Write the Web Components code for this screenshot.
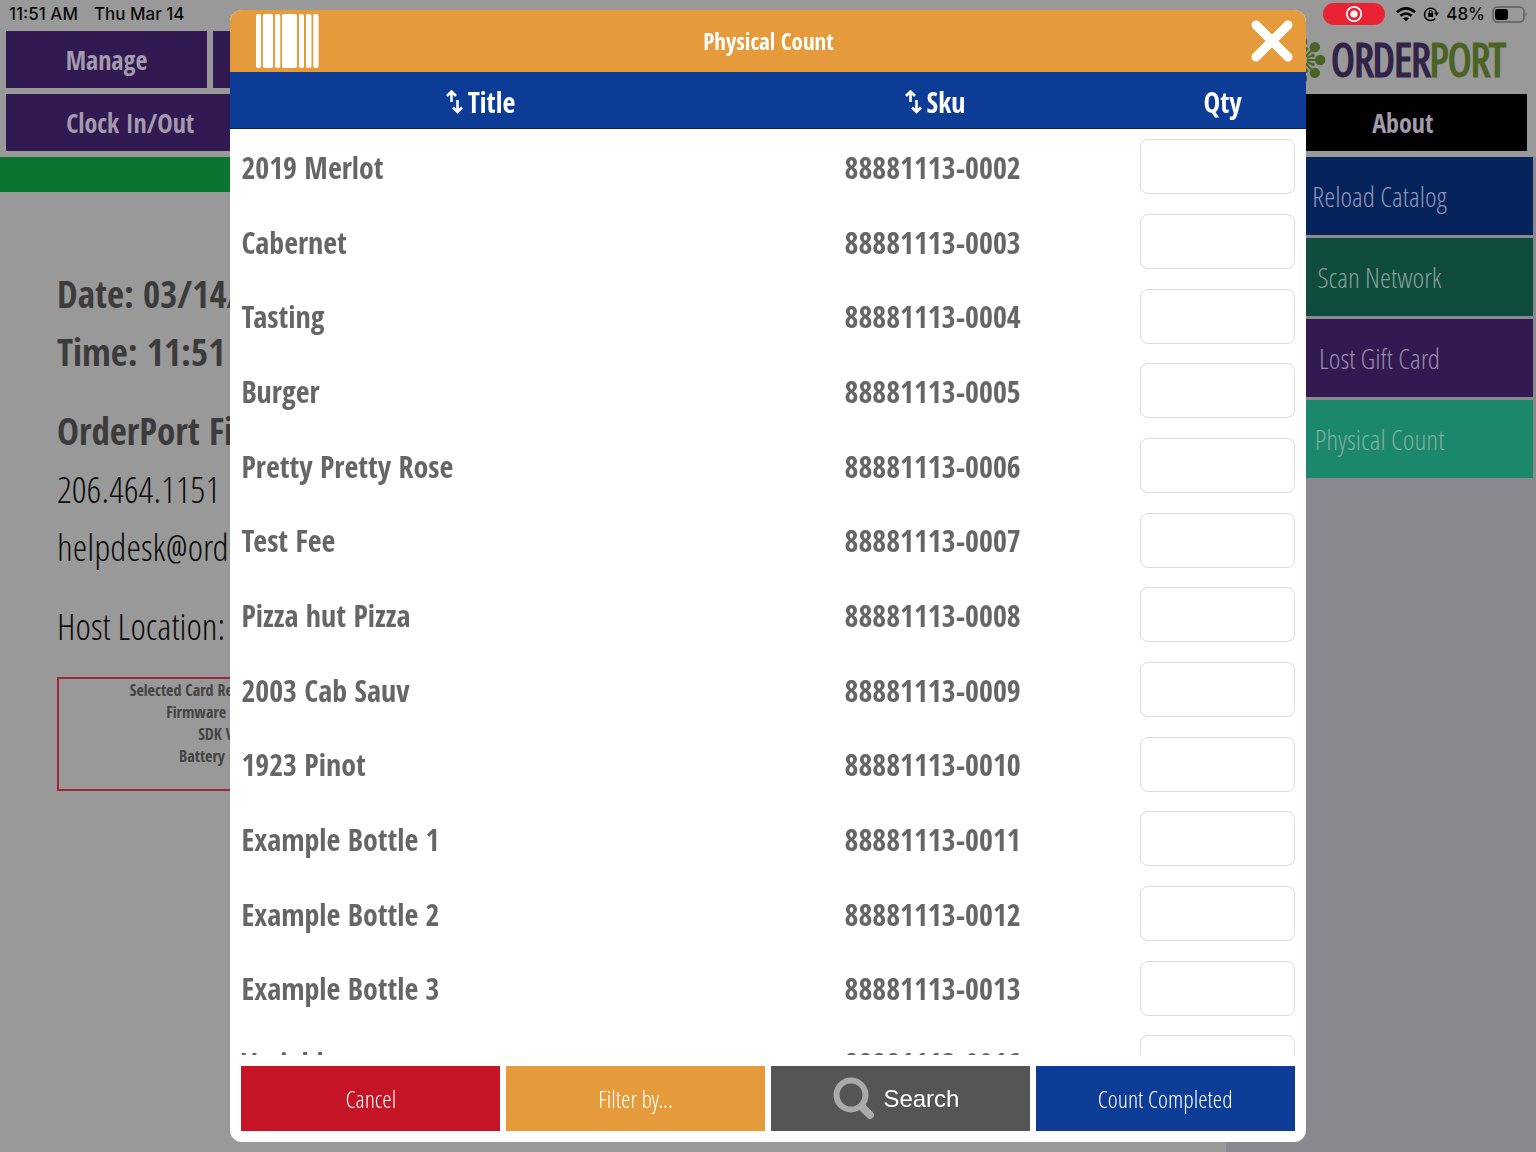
<!DOCTYPE html>
<html lang="en">
<head>
<meta charset="utf-8">
<title>OrderPort - Physical Count</title>
<style>
	body {
		margin: 0;
		min-height: 100vh;
		background: #999;
		color: #3c3c3c;
		--bold: "Open Sans Condensed", "Open Sans", sans-serif;
		--light: "Open Sans Condensed Light", "Open Sans Condensed", "Open Sans", sans-serif;
		font-family: var(--bold);
	}
</style>
</head>
<body>
<pos-screen></pos-screen>
<count-dialog></count-dialog>

<script>
(function() {
	function define(name, html, setup) {
		const tmpl = document.createElement('template');
		tmpl.innerHTML = html;
		customElements.define(name, class extends HTMLElement {
			constructor() {
				super();
				const shadow = this.attachShadow({ mode: 'open' });
				shadow.appendChild(tmpl.content.cloneNode(true));
				if (setup) setup(this, shadow);
			}
		});
	}

	define('status-bar', `
		<style>
			:host {
				display: flex;
				align-items: center;
				gap: 16px;
				height: 28px;
				padding: 0 9px;
				color: #0a0a0a;
				font: 500 17px Inter, sans-serif;
			}
			.right { display: flex; align-items: center; gap: 7px; margin-left: auto; }
			.rec { width: 62px; height: 22px; border-radius: 11px; background: #ea2334; display: grid; place-items: center; margin-right: 4px; }
			svg { display: block; }
		</style>
		<span>11:51 AM</span><span>Thu Mar 14</span>
		<div class="right">
			<div class="rec"><svg width="18" height="18" viewBox="0 0 18 18"><circle cx="9" cy="9" r="7.2" fill="none" stroke="#fff" stroke-width="1.8"/><circle cx="9" cy="9" r="3.6" fill="#fff"/></svg></div>
			<svg width="20" height="15" viewBox="0 0 20 15" fill="none" stroke="#000" stroke-width="2.6"><path d="M1 5.2Q10-2.4 19 5.2M4.4 8.8Q10 4.2 15.6 8.8"/><path d="M7 11.3Q10 9 13 11.3L10 14.4z" fill="#000" stroke="none"/></svg>
			<svg width="16" height="16" viewBox="0 0 16 16" fill="none" stroke="#000" stroke-width="1.5"><path d="M12.3 12.5A6.2 6.2 0 1 1 13.6 6.5"/><path d="M11 6.5h5l-2.5 3.4z" fill="#000" stroke="none"/><path d="M6.2 7V6a1.5 1.5 0 0 1 3 0v1" stroke-width="1.1"/><path d="M5.2 7h5v4h-5z" fill="#000" stroke="none"/></svg>
			<span>48%</span>
			<svg width="35" height="17" viewBox="0 0 35 17"><rect x="1" y="1" width="31" height="15" rx="4.5" fill="none" stroke="#5c5c5c" stroke-width="1.4"/><rect x="3" y="3" width="13" height="11" rx="2.4"/><path d="M33.500 6q2 2.500 0 5z" fill="#5c5c5c"/></svg>
		</div>
	`);

	define('nav-button', `
		<style>
			:host { display: block; flex: 1; min-width: 0; }
			button {
				display: block;
				width: 100%;
				height: 57px;
				border: 0;
				padding: 0;
				background: var(--tone, #311a52);
				color: #a39bab;
				font: bold 26px/36px var(--bold);
				white-space: nowrap;
			}
		</style>
		<button type="button"><slot></slot></button>
	`);

	define('side-button', `
		<style>
			:host { display: block; }
			button {
				display: block;
				width: 100%;
				height: 78px;
				border: 0;
				background: var(--tone);
				color: var(--ink);
				font: 300 28px/38px var(--light);
			}
		</style>
		<button type="button"><slot></slot></button>
	`);

	define('brand-logo', `
		<style>
			:host { display: flex; align-items: center; justify-content: flex-end; gap: 6px; width: 257px; height: 57px; padding-right: 22px; }
			svg { width: 48px; height: 48px; flex: none; }
			b { font: 300 44px/57px var(--light); color: #322348; -webkit-text-stroke: 3px #322348; }
			i { font-style: normal; color: #4b6425; -webkit-text-stroke-color: #4b6425; }
		</style>
		<svg viewBox="-24 -24 48 48" stroke="#4b6425" stroke-width="2" fill="#4b6425"></svg>
		<b>ORDER<i>PORT</i></b>
	`, (host, shadow) => {
		// eight round petals on stalks, small buds between them
		let out = '';
		for (let a = 0; a < 360; a += 45) {
			out += `<g transform="rotate(${a})"><path d="M5 0H16"/><circle cx="18.200" cy="0" r="5.200" stroke="none"/><path d="M5 2 11 4.500"/><circle cx="11" cy="4.500" r="1.800" stroke="none"/></g>`;
		}
		shadow.querySelector('svg').innerHTML = out;
	});

	define('pos-screen', `
		<style>
			:host { display: flex; flex-direction: column; min-height: 100vh; }
			.row { display: flex; gap: 6px; padding: 0 9px 6px 6px; }
			.row:first-of-type { padding-top: 3px; }
			.black { --tone: #000; }
			.main { display: grid; grid-template-columns: 1fr 310px; flex: 1; }
			.bar { height: 35px; margin-bottom: 73px; background: #0a7431; }
			.info { padding: 0 57px; font-size: 37px; line-height: 58px; }
			p { margin: 0 0 21px; font-weight: 300; font-family: var(--light); color: #0c0c0c; white-space: nowrap; }
			strong { color: #3c3c3c; font-weight: bold; font-family: var(--bold); }
			a { color: inherit; text-decoration: none; }
			.card {
				width: 420px;
				height: 114px;
				margin-top: 22px;
				border: 2px solid #a32638;
				font: bold 16px/22px var(--bold);
				color: #444;
				box-sizing: border-box;
			}
			.card div { width: 202px; text-align: right; }
			.side { background: #8a8990; padding-right: 3px; display: flex; flex-direction: column; gap: 3px; }
		</style>
		<status-bar></status-bar>
		<div class="row">
			<nav-button>Manage</nav-button>
			<nav-button></nav-button><nav-button></nav-button><nav-button></nav-button><nav-button></nav-button><nav-button></nav-button>
			<brand-logo></brand-logo>
		</div>
		<div class="row">
			<nav-button>Clock In/Out</nav-button>
			<nav-button></nav-button><nav-button></nav-button><nav-button></nav-button><nav-button></nav-button>
			<nav-button class="black">About</nav-button>
		</div>
		<div class="main">
			<section>
				<div class="bar"></div>
				<div class="info">
					<p><strong>Date: 03/14/</strong><br><strong>Time: 11:51</strong></p>
					<p><strong>OrderPort Fi</strong><br>206.464.1151<br><a href="#">helpdesk@orde</a></p>
					<p>Host Location:</p>
					<div class="card"><div>Selected Card Reader<br>Firmware Vers.<br>SDK Vers.:<br>Battery Level</div></div>
				</div>
			</section>
			<nav class="side">
				<side-button style="--tone:#07235c;--ink:#8d96b4">Reload Catalog</side-button>
				<side-button style="--tone:#0f4c3d;--ink:#83a098">Scan Network</side-button>
				<side-button style="--tone:#311a52;--ink:#9a8aa8">Lost Gift Card</side-button>
				<side-button style="--tone:#1b876c;--ink:#7fae9e">Physical Count</side-button>
			</nav>
		</div>
	`);

	define('dialog-button', `
		<style>
			:host { display: block; flex: 1; }
			button {
				display: flex;
				align-items: center;
				justify-content: center;
				gap: 8px;
				width: 100%;
				height: 65px;
				border: 0;
				background: var(--tone);
				color: #fff;
				font: 300 24px/34px var(--light);
			}
			:host([plain]) button { padding-right: 14px; font: 400 24px/34px "Liberation Sans", sans-serif; }
		</style>
		<button type="button"><slot></slot></button>
	`);

	define('sort-label', `
		<style>
			:host { display: block; }
			button { display: flex; align-items: center; gap: 4px; margin: 0 auto; border: 0; padding: 0; background: none; color: inherit; font: inherit; }
		</style>
		<button type="button">
			<svg width="19" height="24" viewBox="0 0 19 24" fill="none" stroke="#fff" stroke-width="2.600"><path d="M6.500 12V2M2 6 6.500 1.500 11 6M12.500 10V21M8 17.500 12.500 22 17 17.500"/></svg>
			<slot></slot>
		</button>
	`);

	define('count-table', `
		<style>
			:host { display: block; flex: 1; min-height: 0; overflow: hidden; }
			table { width: 100%; table-layout: fixed; border-collapse: collapse; }
			.sku { width: 410px; }
			.qty { width: 166px; }
			th { height: 57px; padding: 2px 0 0; box-sizing: border-box; background: #0d3c97; color: #fff; font: bold 28px/38px var(--bold); box-shadow: inset 0 -1px #10225c; }
			td { height: 75px; padding: 2px 4px 0 0; box-sizing: border-box; text-align: center; color: #666; font: bold 30px/40px var(--bold); }
			tr:nth-child(3n) td { height: 74px; }
			td:first-child { padding-left: 11px; text-align: left; }
			td:last-child { padding: 0 11px 0 0; }
			input {
				display: block;
				box-sizing: border-box;
				width: 100%;
				height: 55px;
				border: 1px solid #dcdcdc;
				border-radius: 8px;
				padding: 0 12px;
				background: #fff;
				font: inherit;
			}
		</style>
		<table>
			<colgroup><col><col class="sku"><col class="qty"></colgroup>
			<thead><tr><th><sort-label>Title</sort-label></th><th><sort-label>Sku</sort-label></th><th>Qty</th></tr></thead>
			<tbody></tbody>
		</table>
	`, (host, shadow) => {
		const items = [
			['2019 Merlot', '0002'],
			['Cabernet', '0003'],
			['Tasting', '0004'],
			['Burger', '0005'],
			['Pretty Pretty Rose', '0006'],
			['Test Fee', '0007'],
			['Pizza hut Pizza', '0008'],
			['2003 Cab Sauv', '0009'],
			['1923 Pinot', '0010'],
			['Example Bottle 1', '0011'],
			['Example Bottle 2', '0012'],
			['Example Bottle 3', '0013'],
			['Variable', '0016']
		];
		shadow.querySelector('tbody').innerHTML = items.map(([title, no]) =>
			`<tr><td>${title}</td><td>88881113-${no}</td><td><input type="text" inputmode="numeric" aria-label="Qty ${title}"></td></tr>`
		).join('');
	});

	define('count-dialog', `
		<style>
			:host { position: fixed; inset: 0; display: flex; justify-content: center; padding: 10px 0; }
			.box { display: flex; flex-direction: column; width: 70%; border-radius: 12px; overflow: hidden; background: #fff; }
			header { display: grid; grid-template-columns: 64px 1fr 64px; align-items: center; height: 62px; padding: 0 2px 0 25px; background: #e59b3c; color: #fff; }
			h1 { margin: 0; padding-right: 22px; text-align: center; font: bold 23px/32px var(--bold); }
			.close { border: 0; padding: 0; background: none; display: grid; place-items: center; }
			svg { display: block; }
			footer { display: flex; gap: 6px; padding: 11px; }
		</style>
		<div class="box" role="dialog" aria-label="Physical Count">
			<header>
				<svg width="64" height="54" viewBox="0 0 64 54" fill="#fff"><rect x="1" width="5" height="54" rx="2"/><rect x="7.800" width="10.300" height="54" rx="2"/><rect x="20" width="5.300" height="54" rx="2"/><rect x="27" width="15" height="54" rx="2"/><rect x="44" width="5" height="54" rx="2"/><rect x="51" width="5.500" height="54" rx="2"/><rect x="58.300" width="5.300" height="54" rx="2"/></svg>
				<h1>Physical Count</h1>
				<button class="close" type="button" aria-label="Close"><svg width="42" height="42" viewBox="0 0 42 42" stroke="#fff" stroke-width="9" stroke-linecap="round"><path d="M5 5 37 37M37 5 5 37"/></svg></button>
			</header>
			<count-table></count-table>
			<footer>
				<dialog-button style="--tone:#c41425">Cancel</dialog-button>
				<dialog-button style="--tone:#e59b3c">Filter by...</dialog-button>
				<dialog-button plain style="--tone:#555"><svg width="42" height="44" viewBox="0 0 42 44" fill="none" stroke="#aaa"><circle cx="18" cy="18" r="14.500" stroke-width="6"/><path d="M29 30 37 38" stroke-width="8" stroke-linecap="round"/></svg>Search</dialog-button>
				<dialog-button style="--tone:#0d3c97">Count Completed</dialog-button>
			</footer>
		</div>
	`);
})();
</script>
</body>
</html>
